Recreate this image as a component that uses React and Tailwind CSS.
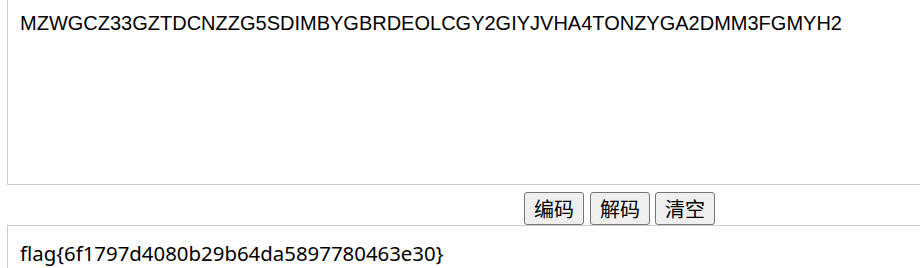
import React from "react";

function App() {
  const encoded = "MZWGCZ33GZTDCNZZG5SDIMBYGBRDEOLCGY2GIYJVHA4TONZYGA2DMM3FGMYH2";
  const decoded = "flag{6f1797d4080b29b64da5897780463e30}";

  return (
    <div className="w-[920px] h-[268px] overflow-hidden bg-white">
      {/* INPUT */}
      <div className="ml-[7px] w-[1240px] h-[185px] border-l border-b border-[#cccccc] pl-[12px] pt-[12px] text-[20px] leading-[22px] text-black font-['Liberation_Sans',Arial,sans-serif]">
        {encoded}
      </div>

      {/* BUTTONS */}
      <div className="flex items-start h-[40px] pt-[7px] pl-[524px] font-['Noto_Sans_CJK_SC',sans-serif] text-[20px] text-black">
        <button className="w-[60px] h-[33px] flex items-center justify-center bg-[#efefef] border border-[#767676] rounded-[3px] leading-none">
          编码
        </button>
        <button className="ml-[6px] w-[60px] h-[33px] flex items-center justify-center bg-[#efefef] border border-[#767676] rounded-[3px] leading-none">
          解码
        </button>
        <button className="ml-[5px] w-[60px] h-[33px] flex items-center justify-center bg-[#efefef] border border-[#767676] rounded-[3px] leading-none">
          清空
        </button>
      </div>

      {/* OUTPUT */}
      <div className="ml-[7px] w-[1240px] h-[120px] border-l border-t border-[#cccccc] pl-[12px] pt-[14px] text-[20.4px] leading-[27px] text-black font-['Noto_Sans','Open_Sans',sans-serif]">
        {decoded}
      </div>
    </div>
  );
}

export default App;
